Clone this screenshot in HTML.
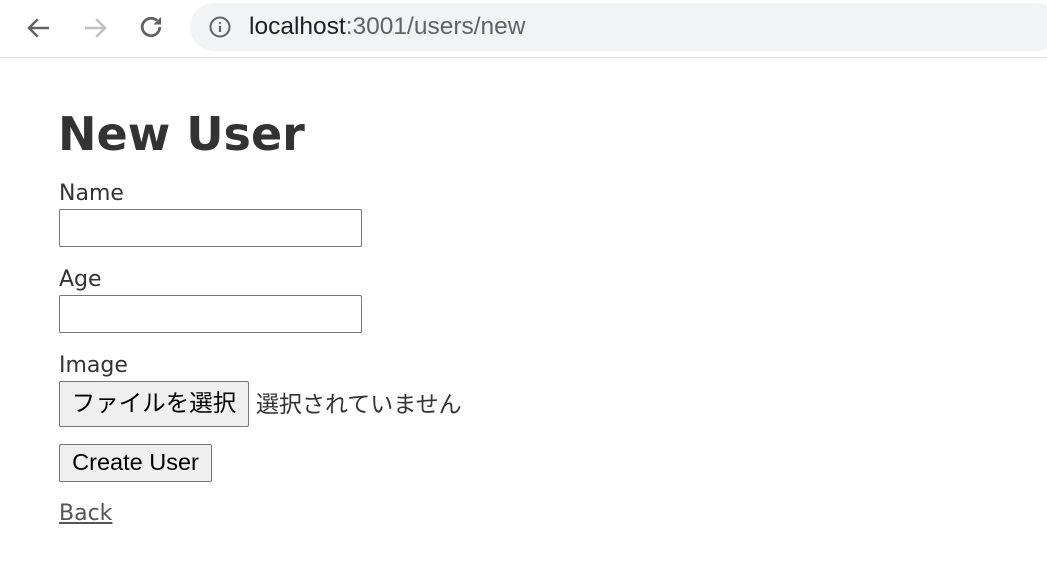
<!DOCTYPE html>
<html><head><meta charset="utf-8"><style>
*{margin:0;padding:0;box-sizing:border-box}
body{width:1047px;height:568px;background:#fff;position:relative;overflow:hidden;font-family:"DejaVu Sans","Liberation Sans",sans-serif;color:#333}
.bar{position:absolute;left:0;top:0;width:1047px;height:58px;background:#fff;border-bottom:1px solid #dadce0}
.url{position:absolute;left:190px;top:3px;width:870px;height:48px;border-radius:24px;background:#f1f3f4}
.url span{position:absolute;left:59px;top:10px;font-family:"Liberation Sans",sans-serif;font-size:24.5px;color:#5f6368}
.url b{font-weight:normal;color:#202124}
.a{position:absolute}
.lbl{position:absolute;left:59px;font-size:22px}
.inp{position:absolute;left:59px;width:303px;height:38px;border:1px solid #767676;border-radius:2px;background:#fff}
.btn{position:absolute;left:59px;background:#efefef;border:1px solid #767676;border-radius:2px;font-family:"Liberation Sans","Noto Sans CJK JP",sans-serif;color:#000;text-align:center}
</style></head><body>
<div class="bar">
<svg class="a" style="left:24px;top:13px" width="30" height="30" viewBox="0 0 24 24"><path d="M20 12H5M11 5l-7 7 7 7" fill="none" stroke="#5f6368" stroke-width="2"/></svg>
<svg class="a" style="left:80px;top:13px" width="30" height="30" viewBox="0 0 24 24"><path d="M4 12h15M13 5l7 7-7 7" fill="none" stroke="#bdc1c6" stroke-width="2"/></svg>
<svg class="a" style="left:136px;top:12px" width="30" height="30" viewBox="0 0 24 24"><path d="M19 12a7 7 0 1 1-2.2-5.1" fill="none" stroke="#5f6368" stroke-width="2.2"/><path d="M20 4v6h-6z" fill="#5f6368"/></svg>
<div class="url">
<svg class="a" style="left:18px;top:12px" width="24" height="24" viewBox="0 0 24 24"><circle cx="12" cy="12" r="9.5" fill="none" stroke="#5f6368" stroke-width="2"/><path d="M12 11v6M12 7v1.8" stroke="#5f6368" stroke-width="2.2"/></svg>
<span><b>localhost</b>:3001/users/new</span></div>
</div>
<div class="a" style="left:58px;top:107px;font-size:46px;font-weight:bold">New User</div>
<div class="lbl" style="top:181px">Name</div>
<div class="inp" style="top:209px"></div>
<div class="lbl" style="top:267px">Age</div>
<div class="inp" style="top:295px"></div>
<div class="lbl" style="top:353px">Image</div>
<div class="btn" style="top:381px;width:190px;height:46px;line-height:42px;font-size:23.5px">ファイルを選択</div>
<div class="a" style="left:256px;top:387px;font-size:23px;font-family:'Noto Sans CJK JP',sans-serif;line-height:30px;color:#333">選択されていません</div>
<div class="btn" style="top:444px;width:153px;height:38px;line-height:35px;font-size:23.5px">Create User</div>
<div class="a" style="left:59px;top:501px;font-size:22px;color:#555;text-decoration:underline">Back</div>
</body></html>
